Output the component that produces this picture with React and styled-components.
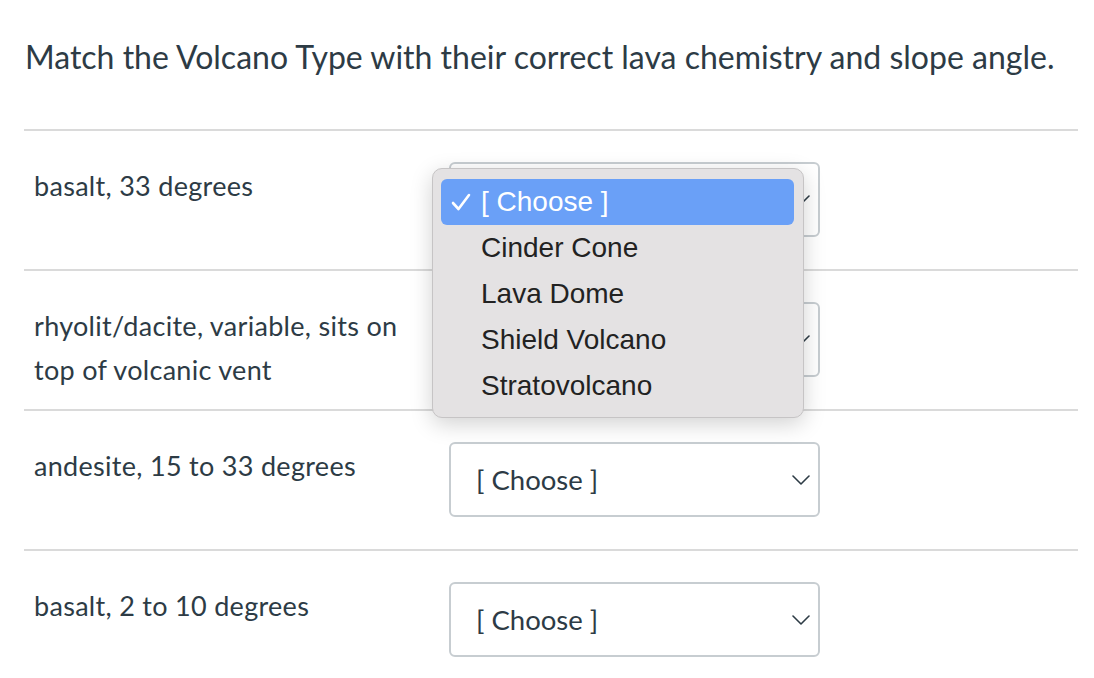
import styled, { createGlobalStyle } from "styled-components";

const GlobalStyle = createGlobalStyle`
  html, body {
    margin: 0;
    padding: 0;
    background: #ffffff;
  }
  body {
    font-family: Lato, "Liberation Sans", sans-serif;
    color: #2d3b45;
  }
`;

const rows = [
  { label: "basalt, 33 degrees", open: true },
  { label: "rhyolit/dacite, variable, sits on top of volcanic vent" },
  { label: "andesite, 15 to 33 degrees" },
  { label: "basalt, 2 to 10 degrees" },
];

const options = [
  "[ Choose ]",
  "Cinder Cone",
  "Lava Dome",
  "Shield Volcano",
  "Stratovolcano",
];

const Chevron = () => (
  <svg width="18" height="10" viewBox="0 0 18 10" fill="none">
    <polyline
      points="1,1 9,9 17,1"
      stroke="#2d3b45"
      strokeWidth="1.6"
      strokeLinecap="round"
      strokeLinejoin="round"
    />
  </svg>
);

const Check = () => (
  <svg width="20" height="18" viewBox="0 0 20 18" fill="none">
    <polyline
      points="2,10 7.5,16 18,2"
      stroke="#ffffff"
      strokeWidth="2.6"
      strokeLinecap="round"
      strokeLinejoin="round"
    />
  </svg>
);

const App = () => {
  return (
    <>
      <GlobalStyle />
      <Page>
        <Title>Match the Volcano Type with their correct lava chemistry and slope angle.</Title>
        <List>
          {rows.map((row, i) => (
            <Row key={i}>
              <Label>{row.label}</Label>
              <SelectBox>
                <span>[ Choose ]</span>
                <Chevron />
              </SelectBox>
              {row.open && (
                <Menu>
                  {options.map((opt, j) => (
                    <Option key={opt} $active={j === 0}>
                      <Mark>{j === 0 && <Check />}</Mark>
                      {opt}
                    </Option>
                  ))}
                </Menu>
              )}
            </Row>
          ))}
        </List>
      </Page>
    </>
  );
};

export default App;

const Page = styled.div`
  padding: 0 16px 0 24px;
`;

const Title = styled.h1`
  margin: 38px 0 0 1px;
  font-size: 32px;
  font-weight: 400;
  line-height: 1.2;
`;

const List = styled.div`
  margin-top: 53px;
`;

const Row = styled.div`
  position: relative;
  height: 138px;
  border-top: 2px solid #dadada;
  display: flex;
  align-items: flex-start;
  padding-left: 10px;
`;

const Label = styled.div`
  width: 380px;
  margin-right: 35px;
  padding-top: 33px;
  font-size: 27px;
  letter-spacing: 0.3px;
  line-height: 44px;
`;

const SelectBox = styled.div`
  margin-top: 31px;
  box-sizing: border-box;
  width: 371px;
  height: 75px;
  border: 2px solid #c7cdd1;
  border-radius: 6px;
  background: #ffffff;
  display: flex;
  align-items: center;
  justify-content: space-between;
  padding: 0 8px 0 25px;
  font-size: 27.5px;
  color: #2d3b45;
`;

const Menu = styled.div`
  position: absolute;
  left: 408px;
  top: 37px;
  width: 372px;
  box-sizing: border-box;
  padding: 10px 9px 8px 8px;
  background: #e4e2e3;
  border: 1px solid #c6c4c5;
  border-radius: 10px;
  box-shadow: 0 6px 22px rgba(0, 0, 0, 0.18);
  font-family: "Liberation Sans", Arial, sans-serif;
  z-index: 2;
`;

const Option = styled.div`
  height: 46px;
  display: flex;
  align-items: center;
  border-radius: 6px;
  font-size: 28px;
  color: ${(p) => (p.$active ? "#ffffff" : "#222222")};
  background: ${(p) => (p.$active ? "#6aa0f7" : "transparent")};
`;

const Mark = styled.span`
  width: 40px;
  display: flex;
  justify-content: flex-start;
  padding-left: 10px;
  box-sizing: border-box;
`;
